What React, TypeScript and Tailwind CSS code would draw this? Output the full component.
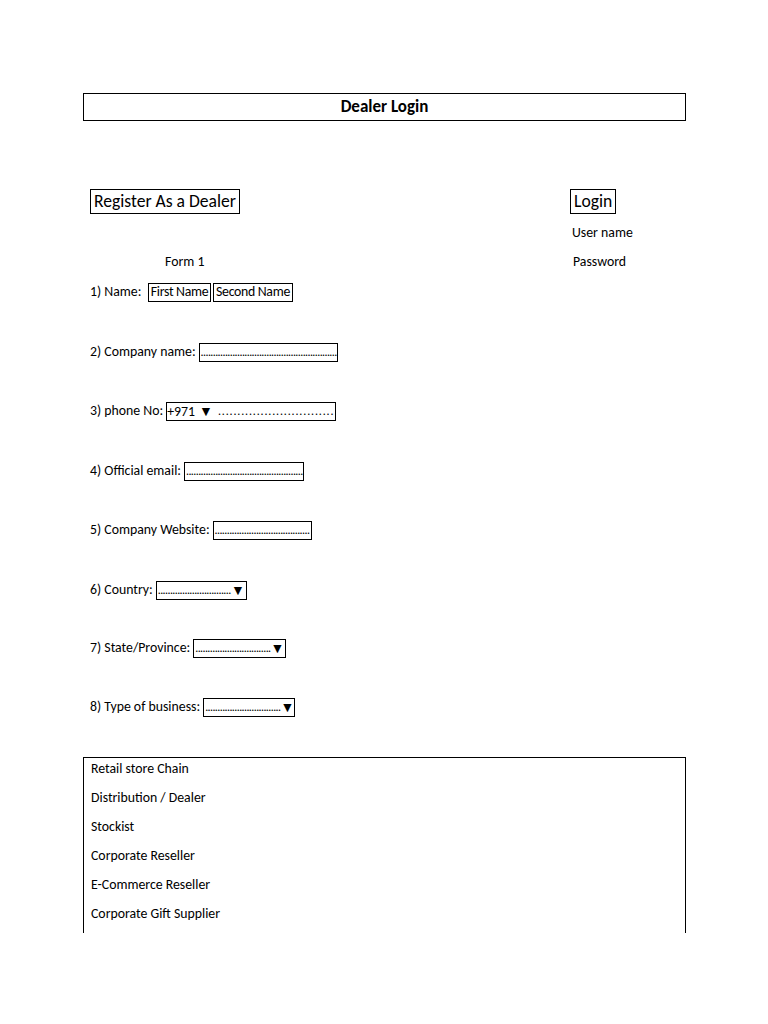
import React from "react";

const font = { fontFamily: "Carlito, Lato, 'Liberation Sans', sans-serif" };

function FieldBox({ w, dots, arrow }: { w: string; dots: number; arrow?: boolean }) {
  return (
    <span className={`${w} h-[19px] border border-black flex items-end overflow-hidden pl-[1px] pr-[1px] leading-none`}>
      <span className="whitespace-nowrap tracking-[-0.6px] text-[12px] pb-[3px]">{".".repeat(dots)}</span>
      {arrow && <span className="text-[14px] leading-none self-center ml-auto">▼</span>}
    </span>
  );
}

function Row({ label, children, mt }: { label: string; children: React.ReactNode; mt: string }) {
  return (
    <div className={`flex items-center h-[19px] ${mt} whitespace-nowrap`}>
      <span className="mr-[3px]">{label}</span>
      {children}
    </div>
  );
}

export default function App() {
  return (
    <div className="w-[768px] h-[1024px] bg-white text-black text-[13.8px]" style={font}>
      <div className="pt-[93px] pl-[83px]">
        <div className="w-[603px] h-[28px] border border-black flex items-center justify-center font-bold text-[17px]">
          Dealer Login
        </div>
        <div className="flex mt-[68px]">
          <div className="w-[487px] pl-[7px]">
            <div className="inline-flex h-[25px] border border-black items-center px-[3px] text-[17.6px]">
              Register As a Dealer
            </div>
            <div className="h-[19px] flex items-center mt-[39px] pl-[75px]">Form 1</div>
            <div className="flex items-center h-[19px] mt-[11px] whitespace-nowrap">
              <span className="w-[58px]">1) Name:</span>
              <span className="h-[19px] w-[63px] border border-black flex items-center justify-center tracking-[-0.3px]">First Name</span>
              <span className="h-[19px] w-[80px] ml-[2px] border border-black flex items-center justify-center tracking-[-0.3px]">Second Name</span>
            </div>
            <Row label="2) Company name:" mt="mt-[41px]">
              <FieldBox w="w-[139px]" dots={56} />
            </Row>
            <Row label="3) phone No:" mt="mt-[40px]">
              <span className="w-[170px] h-[19px] border border-black flex items-center overflow-hidden whitespace-nowrap leading-none">
                <span>+971</span>
                <span className="text-[14px] ml-[4px]">▼</span>
                <span className="ml-[5px] self-end pb-[3px] text-[12px] tracking-[0.85px]">{".".repeat(30)}</span>
              </span>
            </Row>
            <Row label="4) Official email:" mt="mt-[41px]">
              <FieldBox w="w-[120px]" dots={48} />
            </Row>
            <Row label="5) Company Website:" mt="mt-[40px]">
              <FieldBox w="w-[99px]" dots={39} />
            </Row>
            <Row label="6) Country:" mt="mt-[41px]">
              <FieldBox w="w-[91px]" dots={30} arrow />
            </Row>
            <Row label="7) State/Province:" mt="mt-[39px]">
              <FieldBox w="w-[93px]" dots={31} arrow />
            </Row>
            <Row label="8) Type of business:" mt="mt-[40px]">
              <FieldBox w="w-[92px]" dots={31} arrow />
            </Row>
          </div>
          <div className="flex flex-col">
            <div className="inline-flex self-start h-[25px] border border-black items-center px-[3px] text-[17.6px]">
              Login
            </div>
            <div className="h-[19px] flex items-center mt-[10px] pl-[2px]">User name</div>
            <div className="h-[19px] flex items-center mt-[10px] pl-[3px]">Password</div>
          </div>
        </div>
        <div className="w-[603px] h-[176px] mt-[40px] border-l border-t border-r border-black pl-[7px] pt-[2px]">
          {[
            "Retail store Chain",
            "Distribution / Dealer",
            "Stockist",
            "Corporate Reseller",
            "E-Commerce Reseller",
            "Corporate Gift Supplier",
          ].map((t, i) => (
            <div key={i} className="h-[29px] flex items-center">
              <span className="-mt-[10px]">{t}</span>
            </div>
          ))}
        </div>
      </div>
    </div>
  );
}
